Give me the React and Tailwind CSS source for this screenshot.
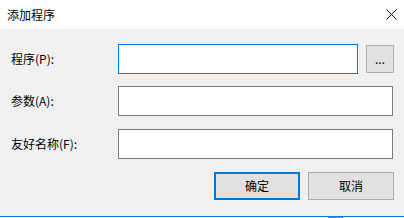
import React from 'react';

function App() {
  const font = { fontFamily: '"Noto Sans CJK SC", "Noto Sans", sans-serif' };
  return (
    <div className="w-[404px] h-[218px] flex flex-col bg-[#f0f0f0] text-[12px] text-black overflow-hidden" style={font}>
      {/* title bar */}
      <div className="h-[29px] bg-white flex items-center justify-between pl-[7px] pr-[7px]">
        <span className="leading-none">添加程序</span>
        <svg width="11" height="11" viewBox="0 0 11 11" className="mr-[0px]">
          <path d="M0.5 0.5 L10.5 10.5 M10.5 0.5 L0.5 10.5" stroke="#000" strokeWidth="1" fill="none" />
        </svg>
      </div>

      <div className="flex-1 flex flex-col pt-[15px]">
        <div className="flex items-center h-[30px]">
          <label className="w-[118px] pl-[11px]">程序(P):</label>
          <input className="w-[240px] h-[30px] bg-white border border-[#0078d7] outline-none" />
          <button className="ml-[8px] w-[28px] h-[28px] bg-[#e1e1e1] border border-[#adadad] flex items-end justify-center pb-[7px] leading-none">
            ...
          </button>
        </div>
        <div className="flex items-center h-[30px] mt-[12px]">
          <label className="w-[118px] pl-[11px]">参数(A):</label>
          <input className="w-[275px] h-[30px] bg-white border border-[#7a7a7a] outline-none" />
        </div>
        <div className="flex items-center h-[30px] mt-[13px]">
          <label className="w-[118px] pl-[11px]">友好名称(F):</label>
          <input className="w-[275px] h-[30px] bg-white border border-[#7a7a7a] outline-none" />
        </div>
        <div className="flex justify-end gap-[8px] mt-[13px] pr-[10px]">
          <button className="w-[86px] h-[28px] bg-[#e1e1e1] border-2 border-[#0078d7] leading-none">确定</button>
          <button className="w-[86px] h-[28px] bg-[#e1e1e1] border border-[#adadad] leading-none">取消</button>
        </div>
      </div>

      <div className="h-px bg-[#0078d7]" />
      <div className="h-px flex">
        <div className="w-[328px]" />
        <div className="w-[15px] bg-[#8a8a8a]" />
      </div>
    </div>
  );
}

export default App;
